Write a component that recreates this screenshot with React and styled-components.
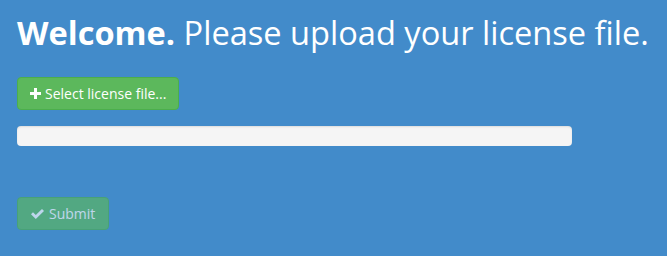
import React from "react";
import styled, { createGlobalStyle } from "styled-components";

const Global = createGlobalStyle`
  html, body { margin: 0; padding: 0; background: #428bca; }
  body { font-family: "Open Sans", "Noto Sans", sans-serif; color: #fff; }
  * { box-sizing: border-box; }
`;

const Page = styled.div`
  padding: 15px 17px 0 17px;
  width: 667px;
  height: 256px;
  background: #428bca;
`;

const Title = styled.h1`
  margin: 0 0 27px 0;
  font-size: 32.6px;
  line-height: 35px;
  font-weight: 400;
  color: #fff;
  white-space: nowrap;
  strong { font-weight: 700; }
`;

const Button = styled.button`
  display: inline-flex;
  align-items: center;
  gap: ${(p) => p.$gap || 4}px;
  height: 33px;
  padding: 0 ${(p) => p.$pad || 12}px;
  font-family: "Open Sans", "Noto Sans", sans-serif;
  font-size: 14px;
  color: #fff;
  background: #5cb85c;
  border: 1px solid #4cae4c;
  border-radius: 4px;
  opacity: ${(p) => (p.disabled ? 0.65 : 1)};
  cursor: ${(p) => (p.disabled ? "not-allowed" : "pointer")};
`;

const Progress = styled.div`
  width: 555px;
  height: 20px;
  margin-top: 16px;
  background: #f5f5f5;
  border-radius: 4px;
  box-shadow: inset 0 1px 2px rgba(0, 0, 0, 0.1);
`;

const Footer = styled.div`
  margin-top: 51px;
`;

const Plus = () => (
  <svg width="11" height="11" viewBox="0 0 11 11">
    <path d="M4 0h3v4h4v3H7v4H4V7H0V4h4z" fill="#fff" />
  </svg>
);

const Check = () => (
  <svg width="13" height="10" viewBox="0 0 13 10">
    <path d="M0 5.2l2-2 2.8 2.8L11 0l2 2-8.2 8z" fill="#fff" />
  </svg>
);

export default function App() {
  return (
    <Page>
      <Global />
      <Title>
        <strong>Welcome.</strong> Please upload your license file.
      </Title>
      <Button type="button" $gap={4}>
        <Plus />
        Select license file...
      </Button>
      <Progress />
      <Footer>
        <Button type="button" disabled $gap={5} $pad={13}>
          <Check />
          Submit
        </Button>
      </Footer>
    </Page>
  );
}
